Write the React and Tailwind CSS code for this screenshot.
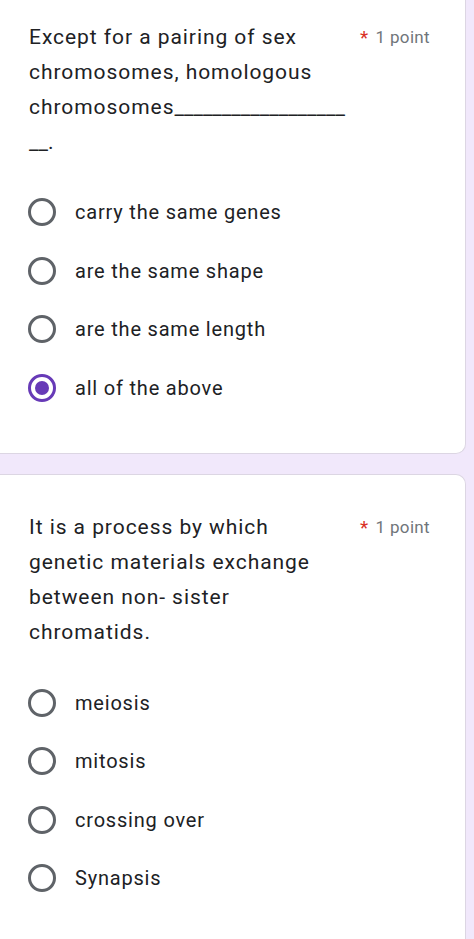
import React from "react";

const q1 = {
  title: (
    <>
      Except for a pairing of sex chromosomes, homologous chromosomes
      <span className="tracking-normal">__________________</span>
      <wbr />
      <span className="tracking-normal">__.</span>
    </>
  ),
  width: "w-[322px]",
  options: ["carry the same genes", "are the same shape", "are the same length", "all of the above"],
  selected: 3,
};

const q2 = {
  title: "It is a process by which genetic materials exchange between non- sister chromatids.",
  width: "w-[298px]",
  options: ["meiosis", "mitosis", "crossing over", "Synapsis"],
  selected: -1,
};

function Radio({ checked }) {
  if (checked) {
    return (
      <div className="w-[28px] h-[28px] rounded-full border-[3px] border-[#673ab7] flex items-center justify-center shrink-0">
        <div className="w-[14px] h-[14px] rounded-full bg-[#673ab7]" />
      </div>
    );
  }
  return <div className="w-[28px] h-[28px] rounded-full border-[3px] border-[#5f6368] shrink-0" />;
}

function Question({ q }) {
  return (
    <>
      <div className="flex items-start pl-[29px] pr-[35px]">
        <div className={`${q.width} text-[21px] leading-[35px] tracking-[0.045em] text-[#202124]`}>{q.title}</div>
        <div className="ml-auto flex items-start gap-[7px] text-[17px] leading-[35px] tracking-[0.02em] text-[#70757a]">
          <span className="text-[#d93025] text-[19px]">*</span>
          <span>1 point</span>
        </div>
      </div>
      <div className="mt-[23px]">
        {q.options.map((o, i) => (
          <div key={o} className="h-[58.6px] flex items-center pl-[28px] gap-[19px]">
            <Radio checked={i === q.selected} />
            <span className="text-[20px] tracking-[0.04em] text-[#202124]">{o}</span>
          </div>
        ))}
      </div>
    </>
  );
}

export default function App() {
  return (
    <div className="min-h-[939px] bg-[#f1e8fb] pr-2 font-['Roboto',sans-serif] overflow-hidden">
      <div className="bg-white border-r border-b border-[#dcd6e3] rounded-br-[10px] pt-[20px] pb-[36px]">
        <Question q={q1} />
      </div>
      <div className="mt-5 bg-white border-r border-t border-[#dcd6e3] rounded-tr-[10px] pt-[35px] pb-10">
        <Question q={q2} />
      </div>
    </div>
  );
}
